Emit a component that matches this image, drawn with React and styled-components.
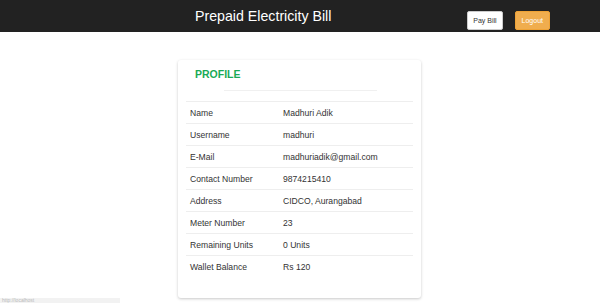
import React from "react";
import styled, { createGlobalStyle } from "styled-components";

const GlobalStyle = createGlobalStyle`
  html, body {
    margin: 0;
    padding: 0;
    background: #fff;
    font-family: "Liberation Sans", Arial, sans-serif;
  }
`;

const rows = [
  ["Name", "Madhuri Adik"],
  ["Username", "madhuri"],
  ["E-Mail", "madhuriadik@gmail.com"],
  ["Contact Number", "9874215410"],
  ["Address", "CIDCO, Aurangabad"],
  ["Meter Number", "23"],
  ["Remaining Units", "0 Units"],
  ["Wallet Balance", "Rs 120"],
];

function App() {
  return (
    <Page>
      <GlobalStyle />
      <Navbar>
        <Title>Prepaid Electricity Bill</Title>
        <Actions>
          <NavButton>Pay Bill</NavButton>
          <NavButton $warning>Logout</NavButton>
        </Actions>
      </Navbar>
      <Main>
        <Card>
          <Heading>PROFILE</Heading>
          <Rule />
          <Table>
            <tbody>
              {rows.map(([k, v]) => (
                <tr key={k}>
                  <Th>{k}</Th>
                  <Td>{v}</Td>
                </tr>
              ))}
            </tbody>
          </Table>
        </Card>
      </Main>
      <StatusBar>http://localhost</StatusBar>
    </Page>
  );
}

export default App;

const Page = styled.div`
  position: relative;
  width: 600px;
  height: 303px;
  overflow: hidden;
`;

const Navbar = styled.div`
  height: 32px;
  background: #222222;
  display: flex;
  align-items: center;
  position: relative;
`;

const Title = styled.div`
  color: #fff;
  font-size: 14.2px;
  margin-left: 195px;
  margin-top: -1px;
`;

const Actions = styled.div`
  margin-left: auto;
  margin-right: 50px;
  display: flex;
  gap: 12px;
  margin-top: 9px;
`;

const NavButton = styled.button`
  height: 19px;
  padding: 0 ${(p) => (p.$warning ? "6px" : "5px")};
  font-family: "Liberation Sans", Arial, sans-serif;
  font-size: 7px;
  border-radius: 2px;
  border: 1px solid ${(p) => (p.$warning ? "#eea236" : "#ccc")};
  background: ${(p) => (p.$warning ? "#f0ad4e" : "#fff")};
  color: ${(p) => (p.$warning ? "#fff" : "#333")};
`;

const Main = styled.div`
  display: flex;
  padding-left: 178px;
  padding-top: 28px;
`;

const Card = styled.div`
  width: 227px;
  height: 224px;
  padding: 6px 8px 8px 8px;
  background: #fff;
  border-radius: 3px;
  box-shadow: 0 1px 3px rgba(0, 0, 0, 0.22);
`;

const Heading = styled.div`
  color: #1aaa55;
  font-weight: bold;
  font-size: 10.5px;
  padding-left: 9px;
  margin-top: 2px;
`;

const Rule = styled.div`
  height: 1px;
  background: #f0f0f0;
  margin: 10px 36px 10px 38px;
`;

const Table = styled.table`
  width: 100%;
  border-collapse: collapse;
  font-size: 8.6px;
  color: #333;
`;

const Th = styled.td`
  width: 93px;
  height: 21px;
  padding: 0 0 0 4px;
  border-top: 1px solid #eeeeee;
  vertical-align: middle;
`;

const Td = styled.td`
  padding: 0;
  border-top: 1px solid #eeeeee;
  vertical-align: middle;
`;

const StatusBar = styled.div`
  position: absolute;
  left: 0;
  bottom: 0;
  width: 118px;
  height: 5px;
  background: #f2f2f2;
  color: #bbb;
  font-size: 5px;
  line-height: 5px;
  padding-left: 2px;
  overflow: hidden;
`;
